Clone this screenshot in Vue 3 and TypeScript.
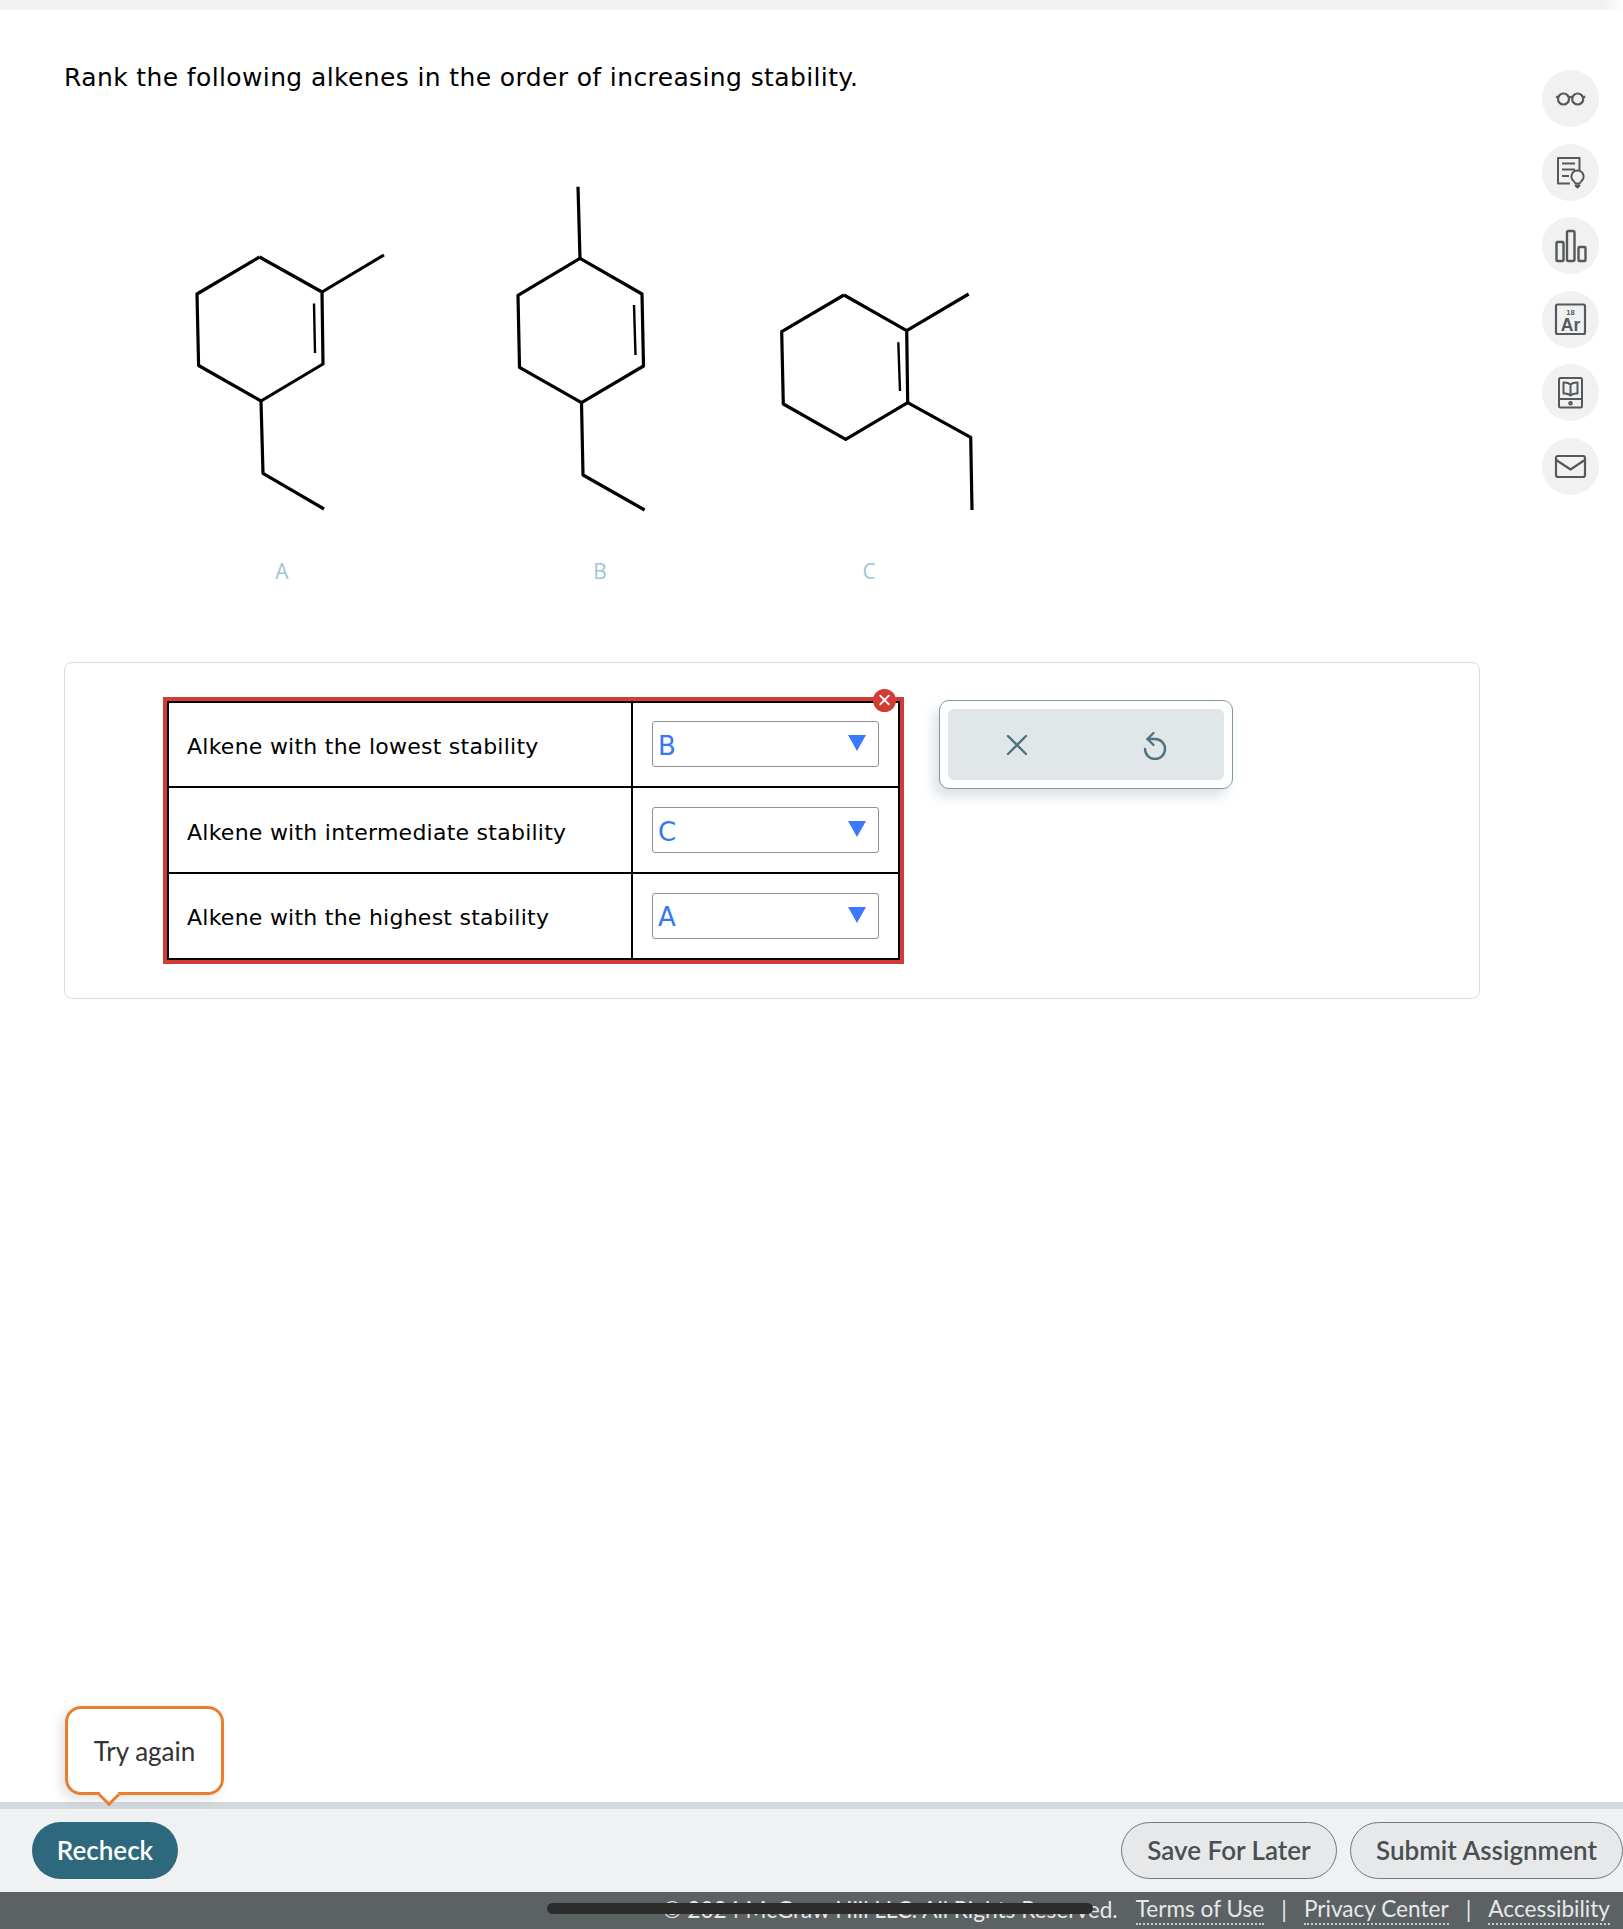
<template>
  <div class="page">
    <div class="topstripe"></div>

    <main class="main">
      <div class="content">
        <p class="question">Rank the following alkenes in the order of increasing stability.</p>

        <svg class="molecules" viewBox="0 0 1000 440" width="1000" height="440" role="img" aria-label="Three alkenes">
          <g fill="none" stroke="#000" stroke-width="3.200" stroke-linejoin="round">
            <polyline v-for="(pts, i) in bonds" :key="i" :points="pts" />
          </g>
          <g fill="none" stroke="#000" stroke-width="2.400">
            <polyline v-for="(pts, i) in innerBonds" :key="i" :points="pts" />
          </g>
          <g class="molecules__labels">
            <text x="218" y="416" text-anchor="middle">A</text>
            <text x="536" y="416" text-anchor="middle">B</text>
            <text x="805" y="416" text-anchor="middle">C</text>
          </g>
        </svg>

        <section class="card">
          <div class="result">
            <button class="result__badge" aria-label="Incorrect">
              <svg viewBox="0 0 24 24" width="24" height="24">
                <path d="M7.500 7.500l9 9M16.500 7.500l-9 9" stroke="#fff" stroke-width="2" stroke-linecap="round" />
              </svg>
            </button>
            <table class="result__table">
              <tbody>
                <tr v-for="row in rows" :key="row.label">
                  <td class="result__label">{{ row.label }}</td>
                  <td class="result__cell">
                    <div class="select">
                      <span class="select__value">{{ row.value }}</span>
                      <span class="select__arrow"></span>
                    </div>
                  </td>
                </tr>
              </tbody>
            </table>
          </div>

          <div class="tools">
            <div class="tools__inner">
              <button class="tools__btn" aria-label="Clear">
                <svg viewBox="0 0 22 22" width="22" height="22" fill="none" stroke="#4f7280" stroke-width="2.400" stroke-linecap="round">
                  <path d="M2 2l18 18M20 2L2 20" />
                </svg>
              </button>
              <button class="tools__btn" aria-label="Undo">
                <svg viewBox="0 0 30 30" width="30" height="30" fill="none" stroke="#4f7280" stroke-width="2.400" stroke-linecap="round" stroke-linejoin="round">
                  <path d="M13.500 3L7.500 9l6 6" />
                  <path d="M7.500 9H15a10 10 0 1 1-10 10" />
                </svg>
              </button>
            </div>
          </div>
        </section>
      </div>

      <aside class="rail">
        <button class="rail__btn" aria-label="Read">
          <svg viewBox="0 0 57 57" width="57" height="57" fill="none" stroke="#55595b" stroke-width="2.200">
            <ellipse cx="21.500" cy="29" rx="5.500" ry="5.500" />
            <ellipse cx="35.700" cy="29" rx="5.500" ry="5.500" />
            <path d="M27 27.500q1.600-1.400 3.200 0M16 27.500l-2-1M41.200 27.500l2-1" />
          </svg>
        </button>
        <button class="rail__btn" aria-label="Hint">
          <svg viewBox="0 0 57 57" width="57" height="57" fill="none" stroke="#55595b" stroke-width="2" stroke-linejoin="round">
            <path d="M28 39.500H16V14h21.500v12" />
            <path d="M20 19.500h13M20 25.500h13M20 32h7" />
            <path d="M35.500 26.500a6 6 0 0 1 4 10.500l-2 2.500h-4l-2-2.500a6 6 0 0 1 4-10.500z" />
            <path d="M33.500 41.500h4l-2 2z" fill="#55595b" />
          </svg>
        </button>
        <button class="rail__btn" aria-label="Report">
          <svg viewBox="0 0 57 57" width="57" height="57" fill="none" stroke="#55595b" stroke-width="2.400">
            <rect x="14.500" y="25" width="7" height="19" rx="1" />
            <rect x="25" y="14" width="7.500" height="30" rx="1.500" />
            <rect x="36.500" y="30" width="7" height="14" rx="1" />
          </svg>
        </button>
        <button class="rail__btn" aria-label="Periodic table">
          <svg viewBox="0 0 57 57" width="57" height="57">
            <rect x="14" y="13.500" width="29" height="29.500" rx="1.500" fill="none" stroke="#55595b" stroke-width="2.200" />
            <text x="28.500" y="23.500" text-anchor="middle" class="rail__num">18</text>
            <text x="28.500" y="39.500" text-anchor="middle" class="rail__sym">Ar</text>
          </svg>
        </button>
        <button class="rail__btn" aria-label="eBook">
          <svg viewBox="0 0 57 57" width="57" height="57" fill="none" stroke="#55595b" stroke-width="2" stroke-linejoin="round">
            <rect x="17" y="14" width="23" height="29.500" rx="1.500" />
            <path d="M17 35h23" />
            <path d="M28.500 20.500q-3-2.500-7-2v11q4-.5 7 2q3-2.500 7-2v-11q-4-.5-7 2zM28.500 20.500v11" />
            <circle cx="28.500" cy="39.200" r="1.300" />
          </svg>
        </button>
        <button class="rail__btn" aria-label="Message">
          <svg viewBox="0 0 57 57" width="57" height="57" fill="none" stroke="#55595b" stroke-width="2.200" stroke-linejoin="round">
            <rect x="14" y="18" width="29" height="21" rx="2" />
            <path d="M15 22.500l13.500 9 13.500-9" stroke-linecap="round" />
          </svg>
        </button>
      </aside>
    </main>

    <div class="actions">
      <div class="tooltip">Try again</div>
      <button class="btn btn--primary">Recheck</button>
      <div class="actions__right">
        <button class="btn btn--ghost">Save For Later</button>
        <button class="btn btn--ghost btn--submit">Submit Assignment</button>
      </div>
    </div>

    <footer class="footer">
      <span class="footer__copy">© 2024 McGraw Hill LLC. All Rights Reserved.</span>
      <template v-for="(link, i) in links" :key="link">
        <span v-if="i > 0" class="footer__sep">|</span>
        <a class="footer__link">{{ link }}</a>
      </template>
      <div class="footer__scroll"></div>
    </footer>
  </div>
</template>

<script setup lang="ts">
// answers as picked in the dropdowns
const rows = [
  { label: 'Alkene with the lowest stability', value: 'B' },
  { label: 'Alkene with intermediate stability', value: 'C' },
  { label: 'Alkene with the highest stability', value: 'A' },
]

const links = ['Terms of Use', 'Privacy Center', 'Accessibility']

// skeletal formulas, coordinates are relative to the svg box
const bonds = [
  // A
  '195.500,94 258,129 259,201 197,238 134.600,202.500 133,131 195.500,94',
  '258,129 320,92',
  '197,238 199,310.400 260,346',
  // B
  '516,95.300 578,131 579.500,203 517.500,239.600 455.500,204.400 454,132.400 516,95.300',
  '514,23.800 516,95.300',
  '517.500,239.600 519,312 580.600,347',
  // C
  '780,132 842.700,167.700 843.700,239.700 781.700,276.300 719.300,241 717.700,168.700 780,132',
  '842.700,167.700 904.700,131',
  '843.700,239.700 906.700,274.300 908,347',
]

const innerBonds = [
  '250,140.500 251,190',
  '570,142 571.500,192',
  '834.300,179.300 836,228',
]
</script>

<style>
html,
body {
  margin: 0;
  background: #fff;
}
</style>

<style scoped>
.page {
  position: relative;
  display: flex;
  flex-direction: column;
  height: 1929px;
  overflow: hidden;
  background: #fff;
}

.topstripe {
  height: 10px;
  background: linear-gradient(to right, #eff1f3 1603px, #fff 1623px);
}

.main {
  flex: 1;
  display: flex;
  justify-content: space-between;
  padding: 0 24px 0 64px;
}

.content {
  width: 1416px;
}

.question {
  margin: 0;
  padding-top: 51px;
  font: 25px/33px "DejaVu Sans", sans-serif;
  letter-spacing: 0.380px;
  color: #000;
}

.molecules {
  display: block;
  margin-top: 69px;
}

.molecules__labels {
  font: 500 21px "Open Sans", sans-serif;
  fill: #9ec6d6;
}

.card {
  display: flex;
  align-items: flex-start;
  gap: 35px;
  box-sizing: border-box;
  height: 337px;
  margin-top: 59px;
  padding: 33.500px 0 0 98px;
  border: 1px solid #d5dde1;
  border-radius: 8px;
}

.result {
  position: relative;
  border: 4px solid #d33c36;
}

.result__badge {
  position: absolute;
  top: -12px;
  right: 4px;
  width: 23px;
  height: 23px;
  padding: 0;
  border: 0;
  border-radius: 50%;
  background: #d33c36;
  display: flex;
  align-items: center;
  justify-content: center;
}

.result__table {
  border-collapse: collapse;
  border: 2px solid #000;
  font: 22px "DejaVu Sans", sans-serif;
  letter-spacing: 0.250px;
  color: #000;
}

.result__table td {
  height: 85.700px;
  padding: 0;
  border: 2px solid #000;
}

.result__label {
  width: 464px;
  box-sizing: border-box;
  padding: 4px 0 0 18px !important;
}

.result__cell {
  width: 267px;
  box-sizing: border-box;
  padding-left: 19px !important;
}

.select {
  display: flex;
  align-items: center;
  justify-content: space-between;
  box-sizing: border-box;
  width: 227px;
  height: 46px;
  padding: 0 12px 0 5px;
  border: 1px solid #8d8f90;
  border-radius: 3px;
  color: #3478f6;
  font-size: 26px;
  letter-spacing: 0;
}

.select__value {
  padding-top: 3px;
}

.select__arrow {
  width: 0;
  height: 0;
  margin-top: -2px;
  border-left: 9px solid transparent;
  border-right: 9px solid transparent;
  border-top: 16px solid #3a7afe;
}

.tools {
  box-sizing: border-box;
  width: 294px;
  height: 89px;
  margin-top: 3.500px;
  padding: 8px;
  background: #fff;
  border: 1.500px solid #7f98a3;
  border-radius: 10px;
  box-shadow: -6px 8px 12px rgba(70, 100, 115, 0.18);
}

.tools__inner {
  display: flex;
  height: 100%;
  border-radius: 6px;
  background: #e1e6e8;
}

.tools__btn {
  flex: 1;
  display: flex;
  align-items: center;
  justify-content: center;
  padding: 0;
  border: 0;
  background: none;
}

.rail {
  display: flex;
  flex-direction: column;
  gap: 16.500px;
  padding-top: 60px;
}

.rail__btn {
  width: 57px;
  height: 57px;
  padding: 0;
  border: 0;
  border-radius: 50%;
  background: #f1f1f2;
}

.rail__btn svg {
  display: block;
}

.rail__num {
  font: 700 7.500px "Liberation Sans", sans-serif;
  fill: #55595b;
}

.rail__sym {
  font: 700 17.500px "Liberation Sans", sans-serif;
  fill: #55595b;
}

.actions {
  position: relative;
  flex: none;
  display: flex;
  align-items: center;
  justify-content: space-between;
  height: 83px;
  padding-left: 32px;
  border-top: 7px solid #d3d9dd;
  background: #f0f1f3;
}

.actions__right {
  display: flex;
  gap: 13px;
}

.btn {
  height: 57px;
  padding-bottom: 3px;
  border-radius: 29px;
  font: 600 26px Lato, sans-serif;
  white-space: nowrap;
}

.btn--primary {
  width: 146px;
  border: 0;
  color: #fff;
  background: #2e687c;
}

.btn--ghost {
  width: 216px;
  border: 1px solid #6e7a7c;
  color: #4a4f52;
  background: #e7e8ea;
}

.btn--submit {
  width: 273px;
}

.tooltip {
  position: absolute;
  left: 65px;
  top: -103px;
  box-sizing: border-box;
  width: 159px;
  height: 89px;
  display: flex;
  align-items: center;
  justify-content: center;
  border: 3px solid #e97f2e;
  border-radius: 16px;
  background: #fff;
  color: #333;
  font: 26px Lato, sans-serif;
  box-shadow: -4px 4px 12px rgba(60, 70, 80, 0.16);
}

.tooltip::after {
  content: "";
  position: absolute;
  left: 33px;
  bottom: -11px;
  width: 16px;
  height: 16px;
  box-sizing: border-box;
  transform: rotate(45deg);
  border-right: 3px solid #e97f2e;
  border-bottom: 3px solid #e97f2e;
  background: #fff;
}

.footer {
  position: relative;
  flex: none;
  display: flex;
  align-items: center;
  justify-content: flex-end;
  box-sizing: border-box;
  height: 37px;
  padding: 0 13px 2px 0;
  background: #5c6163;
  color: #e6e8e9;
  font: 22.600px Lato, sans-serif;
  white-space: nowrap;
}

.footer__copy {
  margin-right: 18px;
}

.footer__sep {
  margin: 0 17px;
}

.footer__link {
  margin-top: 2px;
  padding-bottom: 1px;
  border-bottom: 2px dotted #c9cccd;
  line-height: 26px;
}

.footer__scroll {
  position: absolute;
  left: 547px;
  top: 11px;
  width: 546px;
  height: 11px;
  border-radius: 6px;
  background: #2c2c2c;
}
</style>
